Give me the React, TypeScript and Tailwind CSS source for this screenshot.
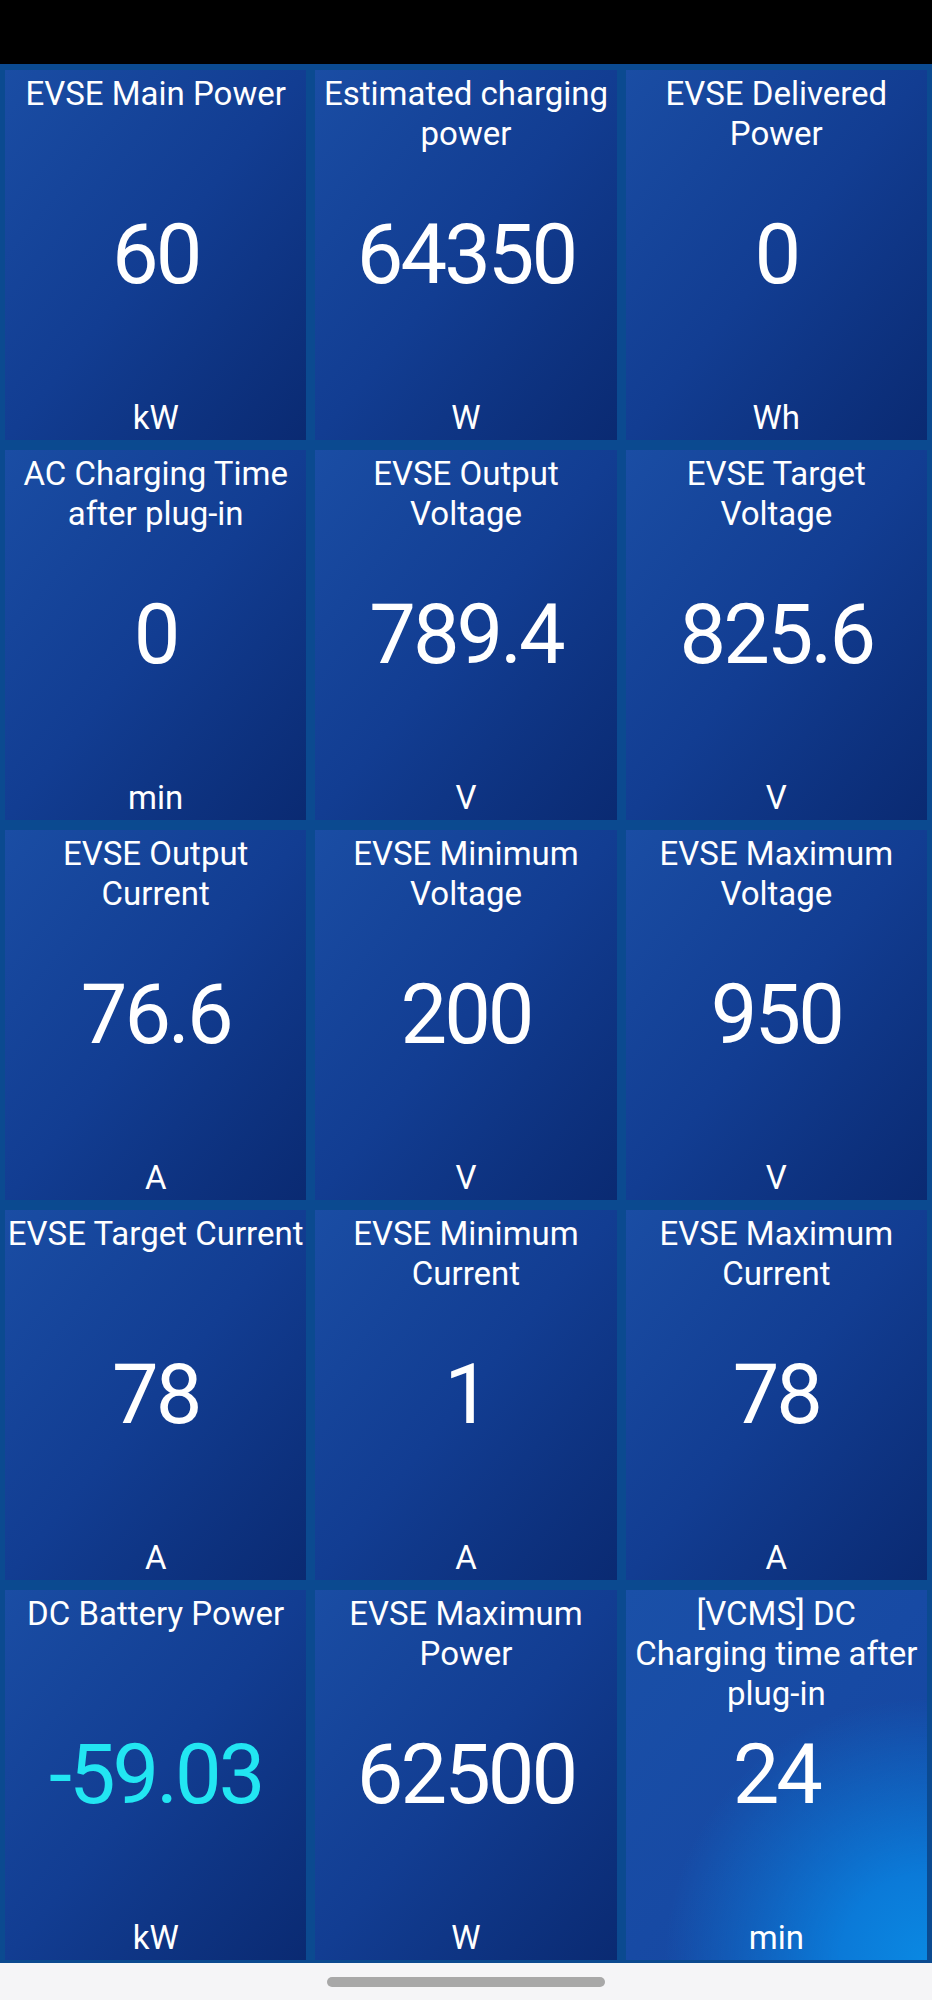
const tiles: { title: string[]; value: string; unit: string; accent?: boolean }[] = [
  { title: ["EVSE Main Power"], value: "60", unit: "kW" },
  { title: ["Estimated charging", "power"], value: "64350", unit: "W" },
  { title: ["EVSE Delivered", "Power"], value: "0", unit: "Wh" },
  { title: ["AC Charging Time", "after plug-in"], value: "0", unit: "min" },
  { title: ["EVSE Output", "Voltage"], value: "789.4", unit: "V" },
  { title: ["EVSE Target", "Voltage"], value: "825.6", unit: "V" },
  { title: ["EVSE Output", "Current"], value: "76.6", unit: "A" },
  { title: ["EVSE Minimum", "Voltage"], value: "200", unit: "V" },
  { title: ["EVSE Maximum", "Voltage"], value: "950", unit: "V" },
  { title: ["EVSE Target Current"], value: "78", unit: "A" },
  { title: ["EVSE Minimum", "Current"], value: "1", unit: "A" },
  { title: ["EVSE Maximum", "Current"], value: "78", unit: "A" },
  { title: ["DC Battery Power"], value: "-59.03", unit: "kW", accent: true },
  { title: ["EVSE Maximum", "Power"], value: "62500", unit: "W" },
  { title: ["[VCMS] DC", "Charging time after", "plug-in"], value: "24", unit: "min" },
];

export default function App() {
  return (
    <div className="w-[932px] h-[2000px] flex flex-col bg-black text-white font-['Roboto',sans-serif]">
      {/* status bar area */}
      <div className="h-[64px] shrink-0 bg-black" />

      {/* gauge grid */}
      <div className="grid grid-cols-3 grid-rows-5 gap-x-[9px] gap-y-[10px] bg-[#0b4a90] px-[5px] pt-[6px] pb-[3px]">
        {tiles.map((t, i) => {
          const last = i === tiles.length - 1;
          return (
            <div
              key={t.title.join(" ")}
              className={`h-[370px] grid grid-rows-[1fr_auto_1fr] text-center ${
                last
                  ? "bg-[radial-gradient(circle_at_100%_100%,#0a88e2_0%,#0b7ad8_18%,rgba(11,90,190,0)_55%),linear-gradient(to_bottom_right,#1a50a8,#1444a0)]"
                  : "bg-linear-to-br from-[#1a4da4] via-[#123d92] to-[#0a2a72]"
              }`}
            >
              <div className="self-start pt-[4px] text-[33px] leading-[40px]">
                {t.title.map((line) => (
                  <div key={line} className="whitespace-nowrap">
                    {line}
                  </div>
                ))}
              </div>
              <div
                className={`text-[83px] leading-[100px] tracking-[-3px] ${
                  t.accent ? "text-[#22e6f2]" : "text-white"
                }`}
              >
                {t.value}
              </div>
              <div className="self-end pb-[2px] text-[33px] leading-[40px]">{t.unit}</div>
            </div>
          );
        })}
      </div>

      {/* navigation bar */}
      <div className="flex-1 bg-[#f5f5f7] flex items-center justify-center">
        <div className="w-[278px] h-[10px] rounded-full bg-[#a8a8a8]" />
      </div>
    </div>
  );
}
